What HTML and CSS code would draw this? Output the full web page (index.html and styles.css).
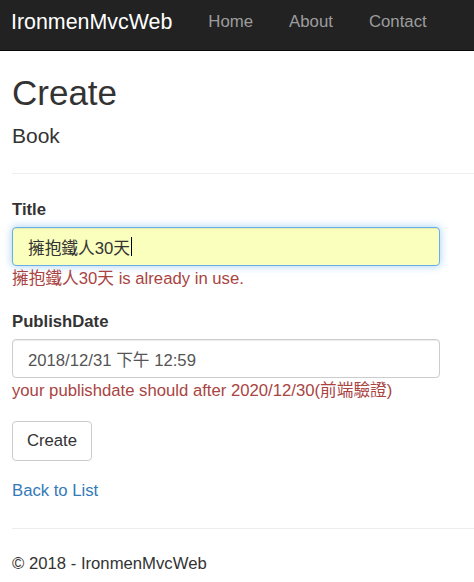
FILE: index.html
```html
<!DOCTYPE html>
<html lang="zh-Hant">
<head>
<meta charset="utf-8">
<title>Create - IronmenMvcWeb</title>
<link rel="stylesheet" href="styles.css">
</head>
<body>
<header class="navbar">
  <a class="brand" href="#">IronmenMvcWeb</a>
  <nav class="nav">
    <a href="#">Home</a>
    <a href="#">About</a>
    <a href="#">Contact</a>
  </nav>
</header>
<main class="container">
  <h2 class="title">Create</h2>
  <h4 class="subtitle">Book</h4>
  <hr class="rule rule-top">
  <form class="form">
    <label class="label">Title</label>
    <div class="control control-focus">擁抱鐵人30天<span class="caret"></span></div>
    <span class="error">擁抱鐵人30天 is already in use.</span>
    <label class="label label-second">PublishDate</label>
    <div class="control control-date">2018/12/31 下午 12:59</div>
    <span class="error">your publishdate should after 2020/12/30(前端驗證)</span>
    <button type="button" class="btn">Create</button>
  </form>
  <a class="back" href="#">Back to List</a>
  <hr class="rule rule-bottom">
  <footer class="footer">© 2018 - IronmenMvcWeb</footer>
</main>
</body>
</html>
```
FILE: styles.css
```css
* { box-sizing: border-box; }
html, body { margin: 0; padding: 0; background: #fff; }
body {
  font-family: "Liberation Sans", Arial, "Noto Sans CJK TC", sans-serif;
  font-size: 16.7px;
  color: #333;
}
.navbar {
  height: 51px;
  background: #222;
  border-bottom: 1px solid #080808;
  display: flex;
  align-items: center;
  padding: 0 0 6px 11px;
}
.brand {
  color: #fff;
  font-size: 21.4px;
  text-decoration: none;
  margin-right: 18px;
  line-height: 24px;
  padding-bottom: 1px;
}
.nav { display: flex; }
.nav a {
  color: #9d9d9d;
  font-size: 16.8px;
  text-decoration: none;
  padding: 0 18px;
  line-height: 20px;
}
.container { padding: 0 0 0 12px; }
.title {
  font-weight: normal;
  font-size: 35px;
  line-height: 40px;
  margin: 22px 0 0;
}
.subtitle {
  font-weight: normal;
  font-size: 21px;
  line-height: 24px;
  margin: 11px 0 0;
}
.rule {
  border: 0;
  border-top: 1px solid #eee;
  margin: 0;
}
.rule-top { margin-top: 25px; }
.form { display: flex; flex-direction: column; align-items: flex-start; }
.label {
  font-weight: bold;
  font-size: 16.7px;
  line-height: 20px;
  margin-top: 26px;
}
.label-second { margin-top: 23px; }
.control {
  margin-top: 7px;
  width: 428px;
  height: 39px;
  border: 1px solid #ccc;
  border-radius: 4px;
  padding: 0 15px;
  display: flex;
  align-items: center;
  font-family: "Liberation Sans", Arial, "Noto Sans CJK TC", sans-serif;
  font-size: 16.7px;
  color: #555;
  box-shadow: inset 0 1px 1px rgba(0,0,0,.075);
}
.control-focus {
  background: #faffbd;
  border-color: #66afe9;
  color: #333;
  box-shadow: inset 0 1px 1px rgba(0,0,0,.075), 0 0 8px rgba(102,175,233,.6);
}
.caret {
  display: inline-block;
  width: 1px;
  height: 19px;
  background: #000;
  margin-left: 1px;
}
.error {
  color: #a94442;
  line-height: 20px;
  margin-top: 3px;
}
.btn {
  margin-top: 20px;
  width: 80px;
  height: 40px;
  background: #fff;
  border: 1px solid #ccc;
  border-radius: 4px;
  font-family: "Liberation Sans", Arial, sans-serif;
  font-size: 16.7px;
  color: #333;
  padding: 0;
}
.back {
  display: block;
  margin-top: 20px;
  line-height: 20px;
  color: #337ab7;
  text-decoration: none;
}
.rule-bottom { margin-top: 27px; }
.footer {
  margin-top: 25px;
  line-height: 20px;
}
```
